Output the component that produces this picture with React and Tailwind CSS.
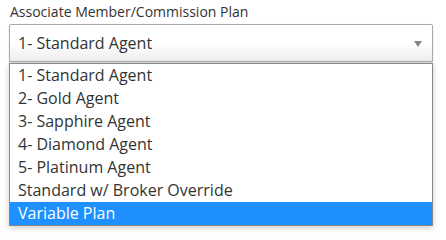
const options = [
  "1- Standard Agent",
  "2- Gold Agent",
  "3- Sapphire Agent",
  "4- Diamond Agent",
  "5- Platinum Agent",
  "Standard w/ Broker Override",
  "Variable Plan",
];

export default function App() {
  const selected = "Variable Plan";

  return (
    <div className="w-[446px] h-[240px] bg-white font-['Open_Sans',sans-serif] text-[#333]">
      <div className="pt-[2px] pl-[9px] w-[433px]">
        <label className="block pl-[1px] text-[14px] leading-[20px] text-[#333]">Associate Member/Commission Plan</label>
        <div className="mt-[2px] h-[38px] flex items-center justify-between pl-[8px] pr-[10px] border border-[#aaa] rounded-t-[2px] bg-gradient-to-b from-white from-50% to-[#eee] shadow-[0_1px_2px_rgba(0,0,0,0.15)]">
          <span className="text-[16px] leading-[23px]">1- Standard Agent</span>
          <svg width="8" height="6" viewBox="0 0 8 6" className="mt-[1px]">
            <path d="M0 0 L8 0 L4 6 Z" fill="#888" />
          </svg>
        </div>
        <ul className="mt-[1px] border border-[#888] bg-white shadow-[0_2px_6px_rgba(0,0,0,0.2)]">
          {options.map((opt) => (
            <li key={opt} className={`pl-[8px] text-[16px] leading-[23px] ${opt === selected ? "bg-[#1e90ff] text-white" : "text-[#333]"}`}>
              {opt}
            </li>
          ))}
        </ul>
      </div>
    </div>
  );
}
